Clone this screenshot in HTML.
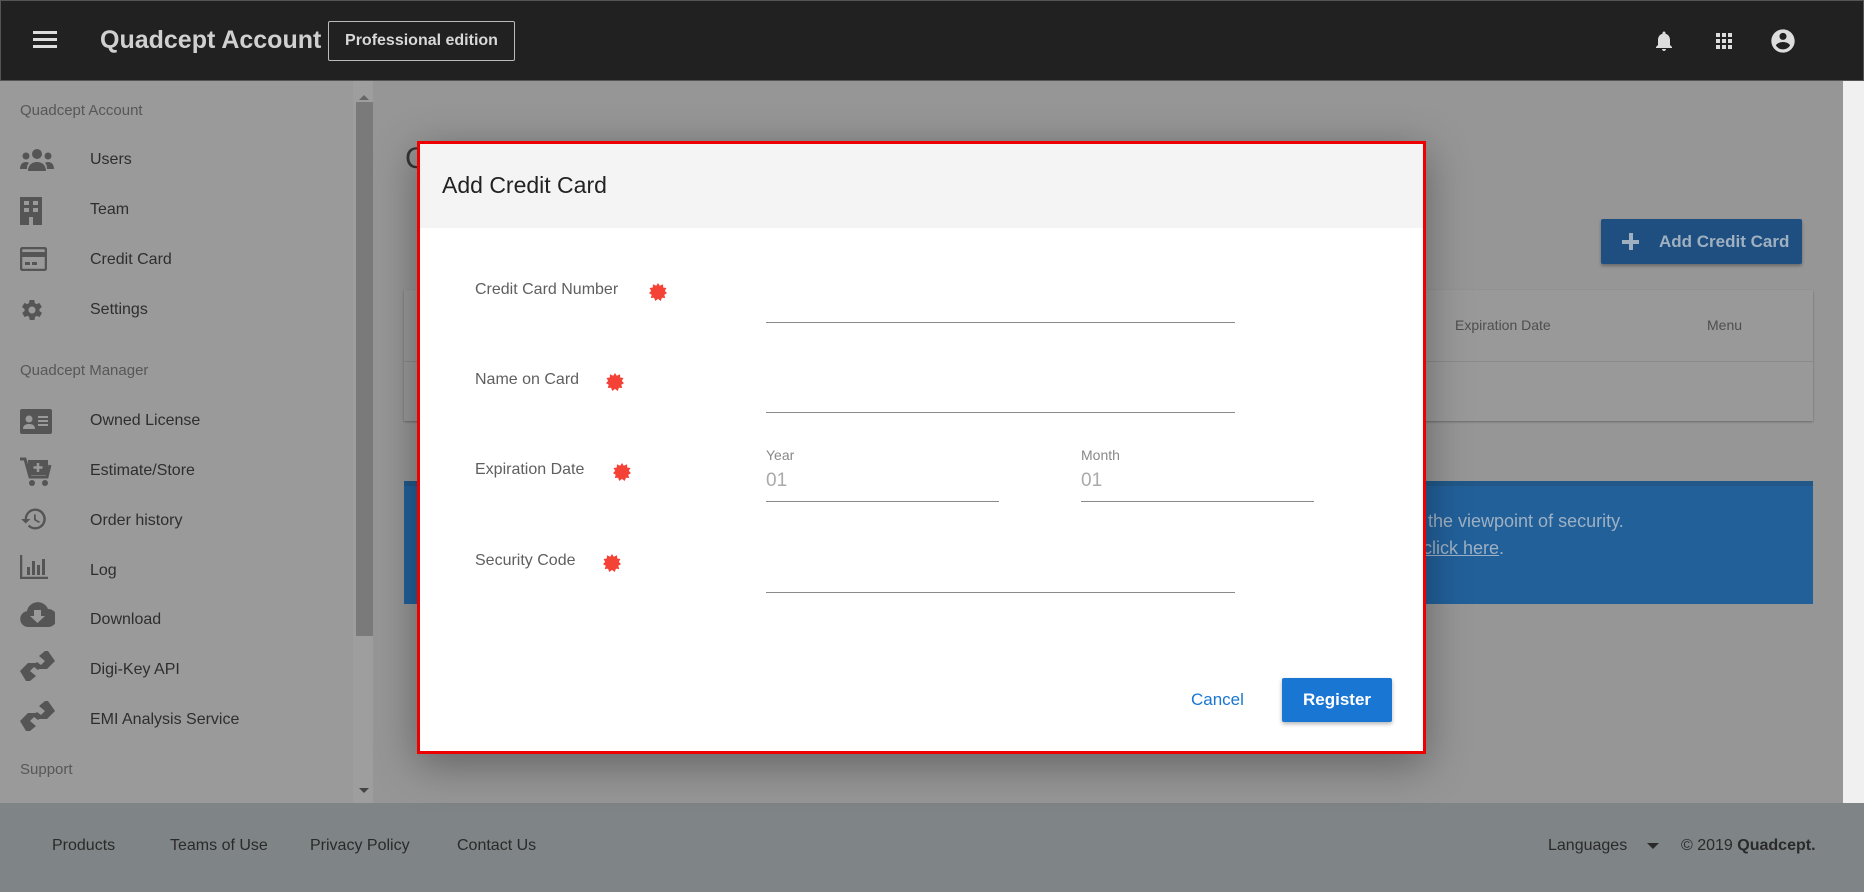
<!DOCTYPE html>
<html><head><meta charset="utf-8"><style>
*{box-sizing:border-box;margin:0;padding:0}
body{width:1864px;height:892px;overflow:hidden;font-family:"Liberation Sans",sans-serif;background:#969696;position:relative}
.a{position:absolute}
.top{left:0;top:0;width:1864px;height:81px;background:#212121;border:1px solid #555}
.side{left:0;top:81px;width:353px;height:722px;background:#9a9a9a;color:#2e2e2e}
.side .it{position:absolute;left:90px;font-size:16px}
.side .hd{position:absolute;left:20px;font-size:15px;color:#575757}
.side svg{position:absolute;left:20px}
.foot{left:0;top:803px;width:1864px;height:89px;background:#7f8486;color:#2a2a2a;font-size:16px}
.foot span{position:absolute;top:34px}
.lbl{position:absolute;left:55px;font-size:16px;color:#5f5f5f}
.star{position:absolute;width:18px;height:18px;background:#f44336;clip-path:polygon(50% 0,60% 15%,78% 7%,79% 25%,97% 28%,88% 44%,100% 56%,85% 65%,90% 83%,72% 82%,65% 100%,50% 88%,35% 100%,28% 82%,10% 83%,15% 65%,0 56%,12% 44%,3% 28%,21% 25%,22% 7%,40% 15%)}
.line{position:absolute;height:1px;background:#8a8a8a}
</style></head><body>
<div class="a top">
 <div class="a" style="left:32px;top:30px;width:24px;height:3px;background:#ddd;box-shadow:0 7px 0 #ddd,0 14px 0 #ddd"></div>
 <div class="a" style="left:99px;top:25px;font-size:25px;font-weight:bold;color:#d0d0d0">Quadcept Account</div>
 <div class="a" style="left:327px;top:20px;width:187px;height:40px;border:1px solid #bbb;border-radius:2px;color:#d8d8d8;font-weight:bold;font-size:16px;line-height:38px;text-align:center">Professional edition</div>
 <svg class="a" style="left:1651px;top:27px" width="24" height="26" viewBox="0 0 24 24"><path fill="#ddd" d="M12 22c1.1 0 2-.9 2-2h-4c0 1.1.9 2 2 2zm6-6v-5c0-3.1-1.6-5.6-4.5-6.3V4c0-.8-.7-1.5-1.5-1.5s-1.5.7-1.5 1.5v.7C7.6 5.4 6 7.9 6 11v5l-2 2v1h16v-1l-2-2z"/></svg>
 <svg class="a" style="left:1711px;top:28px" width="24" height="24" viewBox="0 0 24 24"><path fill="#ddd" d="M4 4h4v4H4zm6 0h4v4h-4zm6 0h4v4h-4zM4 10h4v4H4zm6 0h4v4h-4zm6 0h4v4h-4zM4 16h4v4H4zm6 0h4v4h-4zm6 0h4v4h-4z"/></svg>
 <svg class="a" style="left:1768px;top:26px" width="28" height="28" viewBox="0 0 24 24"><path fill="#ddd" d="M12 2C6.5 2 2 6.5 2 12s4.5 10 10 10 10-4.5 10-10S17.5 2 12 2zm0 3c1.7 0 3 1.3 3 3s-1.300 3-3 3-3-1.3-3-3 1.3-3 3-3zm0 14.2c-2.5 0-4.7-1.3-6-3.2 0-2 4-3.1 6-3.1s6 1.1 6 3.1c-1.3 1.9-3.5 3.2-6 3.2z"/></svg>
</div>
<div class="a side">
 <div class="hd" style="top:21px">Quadcept Account</div>
 <svg style="top:66px" width="34" height="26" viewBox="0 0 34 26"><circle cx="17" cy="7" r="5" fill="#555"/><circle cx="6" cy="9" r="3.5" fill="#555"/><circle cx="28" cy="9" r="3.5" fill="#555"/><path d="M8 24c0-6 4-9 9-9s9 3 9 9z M0 22c0-4 2-7 6-7 2 0 3 1 3 1-2 2-2 4-2 6zM34 22c0-4-2-7-6-7-2 0-3 1-3 1 2 2 2 4 2 6z" fill="#555"/></svg>
 <div class="it" style="top:70px">Users</div>
 <svg style="top:116px" width="22" height="28"><rect width="22" height="28" fill="#555"/><g fill="#9a9a9a"><rect x="4" y="4" width="5" height="4"/><rect x="13" y="4" width="5" height="4"/><rect x="4" y="11" width="5" height="4"/><rect x="13" y="11" width="5" height="4"/><rect x="9" y="20" width="4" height="8"/></g></svg>
 <div class="it" style="top:120px">Team</div>
 <svg style="top:166px" width="27" height="24"><rect x="1" y="1" width="25" height="22" rx="2" fill="none" stroke="#555" stroke-width="2.5"/><rect x="1" y="5" width="25" height="5" fill="#555"/><rect x="5" y="15" width="5" height="3" fill="#555"/><rect x="12" y="15" width="5" height="3" fill="#555"/></svg>
 <div class="it" style="top:170px">Credit Card</div>
 <svg style="top:216px" width="24" height="26" viewBox="0 0 24 24"><path fill="#555" d="M19.4 13c.1-.3.1-.7.1-1s0-.7-.1-1l2.1-1.6c.2-.2.2-.4.1-.6l-2-3.5c-.1-.2-.4-.3-.6-.2l-2.5 1c-.5-.4-1.1-.7-1.7-1l-.4-2.6c0-.3-.2-.5-.5-.5h-4c-.3 0-.5.2-.5.4l-.4 2.7c-.6.2-1.1.6-1.7 1l-2.5-1c-.2-.1-.5 0-.6.2l-2 3.5c-.1.2-.1.5.1.6L4.6 11c0 .3-.1.7-.1 1s0 .7.1 1l-2.1 1.6c-.2.2-.2.4-.1.6l2 3.5c.1.2.4.3.6.2l2.5-1c.5.4 1.100.7 1.7 1l.4 2.6c0 .3.2.5.5.5h4c.3 0 .5-.2.5-.4l.4-2.7c.6-.2 1.2-.6 1.7-1l2.5 1c.2.1.5 0 .6-.2l2-3.5c.1-.2.1-.5-.1-.6L19.4 13zM12 15.5c-1.9 0-3.5-1.6-3.5-3.5s1.6-3.5 3.5-3.5 3.5 1.6 3.5 3.5-1.6 3.5-3.5 3.5z"/></svg>
 <div class="it" style="top:220px">Settings</div>
 <div class="hd" style="top:281px">Quadcept Manager</div>
 <svg style="top:328px" width="32" height="25"><rect width="32" height="25" rx="2" fill="#555"/><circle cx="9" cy="10" r="3.5" fill="#9a9a9a"/><path d="M3 20c0-4 3-5 6-5s6 1 6 5z" fill="#9a9a9a"/><rect x="18" y="7" width="10" height="2" fill="#9a9a9a"/><rect x="18" y="11" width="10" height="2" fill="#9a9a9a"/><rect x="18" y="15" width="10" height="2" fill="#9a9a9a"/></svg>
 <div class="it" style="top:331px">Owned License</div>
 <svg style="top:376px" width="32" height="30" viewBox="0 0 32 30"><path d="M0 2h5l5 18h17l3-12" fill="none" stroke="#555" stroke-width="3"/><rect x="8" y="3" width="20" height="15" fill="#555"/><circle cx="12" cy="26" r="3" fill="#555"/><circle cx="25" cy="26" r="3" fill="#555"/><path d="M18 6v9M13.5 10.5h9" stroke="#9a9a9a" stroke-width="2.5"/></svg>
 <div class="it" style="top:381px">Estimate/Store</div>
 <svg style="top:424px" width="28" height="28" viewBox="0 0 24 24"><path fill="#555" d="M13 3a9 9 0 0 0-9 9H1l3.9 3.9L9 12H6c0-3.9 3.1-7 7-7s7 3.1 7 7-3.1 7-7 7c-1.9 0-3.7-.8-4.9-2.1l-1.4 1.4A9 9 0 1 0 13 3zm-1 5v5l4.3 2.5.7-1.2-3.5-2.1V8z"/></svg>
 <div class="it" style="top:431px">Order history</div>
 <svg style="top:474px" width="28" height="24"><path d="M1 0v23h27" fill="none" stroke="#555" stroke-width="2.5"/><rect x="7" y="12" width="3" height="8" fill="#555"/><rect x="12" y="6" width="3" height="14" fill="#555"/><rect x="17" y="10" width="3" height="10" fill="#555"/><rect x="22" y="4" width="3" height="16" fill="#555"/></svg>
 <div class="it" style="top:481px">Log</div>
 <svg style="top:520px" width="35" height="26" viewBox="0 0 35 26"><path fill="#555" d="M8 26a8 8 0 0 1-1-15.9A11 11 0 0 1 28 8a9 9 0 0 1 0 18z"/><path fill="#9a9a9a" d="M14 9h7v6h4l-7.5 7L10 15h4z"/></svg>
 <div class="it" style="top:530px">Download</div>
 <svg style="top:570px" width="35" height="30" viewBox="0 0 35 30"><path fill="#555" d="M0 20l8-8h10l4 4-4 3-4-3-4 4 6 5-6 5H6zM35 10l-8 8H17l-4-4 4-3 4 3 4-4-6-5 6-5h3z"/></svg>
 <div class="it" style="top:580px">Digi-Key API</div>
 <svg style="top:620px" width="35" height="30" viewBox="0 0 35 30"><path fill="#555" d="M0 20l8-8h10l4 4-4 3-4-3-4 4 6 5-6 5H6zM35 10l-8 8H17l-4-4 4-3 4 3 4-4-6-5 6-5h3z"/></svg>
 <div class="it" style="top:630px">EMI Analysis Service</div>
 <div class="hd" style="top:680px">Support</div>
</div>
<div class="a" style="left:353px;top:81px;width:20px;height:722px;background:#9e9e9e"></div>
<div class="a" style="left:356px;top:102px;width:17px;height:534px;background:#7a7a7a"></div>
<div class="a" style="left:359px;top:90px;border:5px solid transparent;border-bottom-color:#666;width:0;height:0"></div>
<div class="a" style="left:359px;top:788px;border:5px solid transparent;border-top-color:#444;width:0;height:0"></div>
<div class="a" style="left:1843px;top:81px;width:21px;height:722px;background:#f0f0f0"></div>
<div class="a" style="left:405px;top:142px;font-size:30px;color:#333">C</div>
<div class="a" style="left:1601px;top:219px;width:201px;height:45px;background:#1f4f80;border-radius:2px;box-shadow:0 2px 3px rgba(0,0,0,.3);color:#9fb0c0;font-weight:bold;font-size:17px;line-height:45px;padding-left:58px">Add Credit Card</div>
<div class="a" style="left:1622px;top:233px;width:17px;height:17px;background:linear-gradient(#9fb0c0,#9fb0c0) center/17px 4px no-repeat,linear-gradient(#9fb0c0,#9fb0c0) center/4px 17px no-repeat"></div>
<div class="a" style="left:404px;top:290px;width:1409px;height:131px;background:#999;box-shadow:0 1px 2px rgba(0,0,0,.3)"></div>
<div class="a" style="left:404px;top:361px;width:1409px;height:1px;background:#8a8a8a"></div>
<div class="a" style="left:1455px;top:317px;font-size:14px;color:#4e4e4e">Expiration Date</div>
<div class="a" style="left:1707px;top:317px;font-size:14px;color:#4e4e4e">Menu</div>
<div class="a" style="left:404px;top:481px;width:1409px;height:123px;background:#22609a;border-top:5px solid #215888"></div>
<div class="a" style="left:1408px;top:508px;font-size:18px;color:#9eb0c2;line-height:27px">m the viewpoint of security.<br><u>e click here</u>.</div>
<div class="a foot"><span style="left:52px">Products</span><span style="left:170px">Teams of Use</span><span style="left:310px">Privacy Policy</span><span style="left:457px">Contact Us</span><span style="left:1548px">Languages</span><span style="left:1647px;top:40px;border:6px solid transparent;border-top-color:#2a2a2a;width:0;height:0"></span><span style="left:1681px">© 2019 <b>Quadcept.</b></span></div>
<div class="a" style="left:417px;top:141px;width:1009px;height:613px;border:3px solid #e00;background:#fff;box-shadow:0 10px 40px rgba(0,0,0,.35)">
 <div style="height:84px;background:#f4f4f4;font-size:23px;color:#222;padding:28px 0 0 22px">Add Credit Card</div>
 <div class="lbl" style="top:137px">Credit Card Number</div><div class="star" style="left:229px;top:139px"></div>
 <div class="line" style="left:346px;top:178px;width:469px"></div>
 <div class="lbl" style="top:227px">Name on Card</div><div class="star" style="left:186px;top:229px"></div>
 <div class="line" style="left:346px;top:268px;width:469px"></div>
 <div class="lbl" style="top:317px">Expiration Date</div><div class="star" style="left:193px;top:319px"></div>
 <div class="a" style="left:346px;top:303px;font-size:14px;color:#888">Year</div>
 <div class="a" style="left:346px;top:326px;font-size:19px;color:#aaa">01</div>
 <div class="line" style="left:346px;top:357px;width:233px"></div>
 <div class="a" style="left:661px;top:303px;font-size:14px;color:#888">Month</div>
 <div class="a" style="left:661px;top:326px;font-size:19px;color:#aaa">01</div>
 <div class="line" style="left:661px;top:357px;width:233px"></div>
 <div class="lbl" style="top:408px">Security Code</div><div class="star" style="left:183px;top:410px"></div>
 <div class="line" style="left:346px;top:448px;width:469px"></div>
 <div class="a" style="left:771px;top:546px;font-size:17px;color:#1976d2">Cancel</div>
 <div class="a" style="left:862px;top:534px;width:110px;height:44px;background:#1976d2;border-radius:2px;box-shadow:0 2px 4px rgba(0,0,0,.3);color:#fff;font-weight:bold;font-size:17px;line-height:44px;text-align:center">Register</div>
</div>
</body></html>
